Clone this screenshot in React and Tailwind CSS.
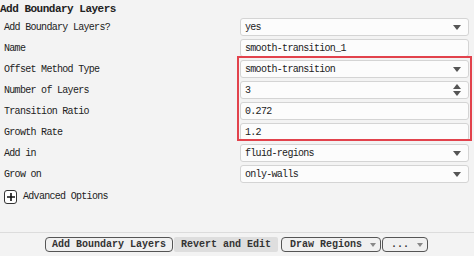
const mono = { fontFamily: '"Liberation Mono", "DejaVu Sans Mono", monospace' }

const Arrow = () => (
  <svg width="8" height="5" viewBox="0 0 8 5" className="shrink-0">
    <path d="M0 0 L8 0 L4 5 Z" fill="#555" />
  </svg>
)

const Spinner = () => (
  <div className="flex flex-col gap-[2px] shrink-0">
    <svg width="8" height="5" viewBox="0 0 8 5">
      <path d="M0 5 L8 5 L4 0 Z" fill="#555" />
    </svg>
    <svg width="8" height="5" viewBox="0 0 8 5">
      <path d="M0 0 L8 0 L4 5 Z" fill="#555" />
    </svg>
  </div>
)

const Field = ({ value, kind }) => (
  <div className="h-[18px] flex items-center justify-between pl-[4px] pr-[7px] bg-[#fcfcfc] border border-[#d4d4d4] rounded-[3px] text-[10px] tracking-[-0.7px] text-[#222]">
    <span>{value}</span>
    {kind === 'select' && <Arrow />}
    {kind === 'spin' && <Spinner />}
  </div>
)

const rows = [
  ['Add Boundary Layers?', 'yes', 'select'],
  ['Name', 'smooth-transition_1', 'text'],
  ['Offset Method Type', 'smooth-transition', 'select'],
  ['Number of Layers', '3', 'spin'],
  ['Transition Ratio', '0.272', 'text'],
  ['Growth Rate', '1.2', 'text'],
  ['Add in', 'fluid-regions', 'select'],
  ['Grow on', 'only-walls', 'select'],
]

export default function App() {
  return (
    <div className="w-[474px] h-[256px] bg-[#f3f3f3] flex flex-col overflow-hidden text-[#222]" style={mono}>
      <div className="h-[16px] pt-[3px] text-[11px] font-bold leading-[12px] tracking-[-0.5px]">Add Boundary Layers</div>
      <div className="flex mt-[2px]">
        <div className="w-[240px] flex flex-col gap-[3px] pl-[4px]">
          {rows.map(([label]) => (
            <div key={label} className="h-[18px] flex items-center text-[10px] tracking-[-0.7px]">{label}</div>
          ))}
        </div>
        <div className="relative w-[229px] flex flex-col gap-[3px]">
          {rows.map(([label, value, kind]) => (
            <Field key={label} value={value} kind={kind} />
          ))}
          <div className="absolute left-[-3px] top-[38px] w-[235px] h-[85px] border-2 border-[#e2424c]" />
        </div>
      </div>
      <div className="flex items-center gap-[6px] pl-[4px] mt-[6px] h-[15px] text-[10px] tracking-[-0.7px]">
        <div className="w-[13px] h-[14px] border border-[#333] rounded-[3px] bg-white flex items-center justify-center">
          <svg width="8" height="8" viewBox="0 0 8 8">
            <path d="M4 0 V8 M0 4 H8" stroke="#111" strokeWidth="1.6" />
          </svg>
        </div>
        <span>Advanced Options</span>
      </div>
      <div className="flex-1" />
      <div className="border-t border-[#dcdcdc] h-[24px] flex items-center pl-[45px] gap-[1px] text-[10px] font-bold text-[#333]">
        <div className="w-[128px] h-[15px] flex items-center justify-center border border-[#555] rounded-[4px] bg-[#f0f0f0]">Add Boundary Layers</div>
        <div className="w-[104px] h-[15px] flex items-center justify-center bg-[#dedede] rounded-[2px]">Revert and Edit</div>
        <div className="w-[100px] h-[15px] pl-[8px] pr-[4px] flex items-center justify-between border border-[#555] rounded-[4px] bg-[#f0f0f0] ml-[2px]">
          <span>Draw Regions</span>
          <svg width="6" height="4" viewBox="0 0 6 4"><path d="M0 0 L6 0 L3 4 Z" fill="#888" /></svg>
        </div>
        <div className="w-[46px] h-[15px] pl-[8px] pr-[4px] flex items-center justify-between border border-[#555] rounded-[4px] bg-[#f0f0f0]">
          <span>...</span>
          <svg width="6" height="4" viewBox="0 0 6 4"><path d="M0 0 L6 0 L3 4 Z" fill="#888" /></svg>
        </div>
      </div>
    </div>
  )
}
